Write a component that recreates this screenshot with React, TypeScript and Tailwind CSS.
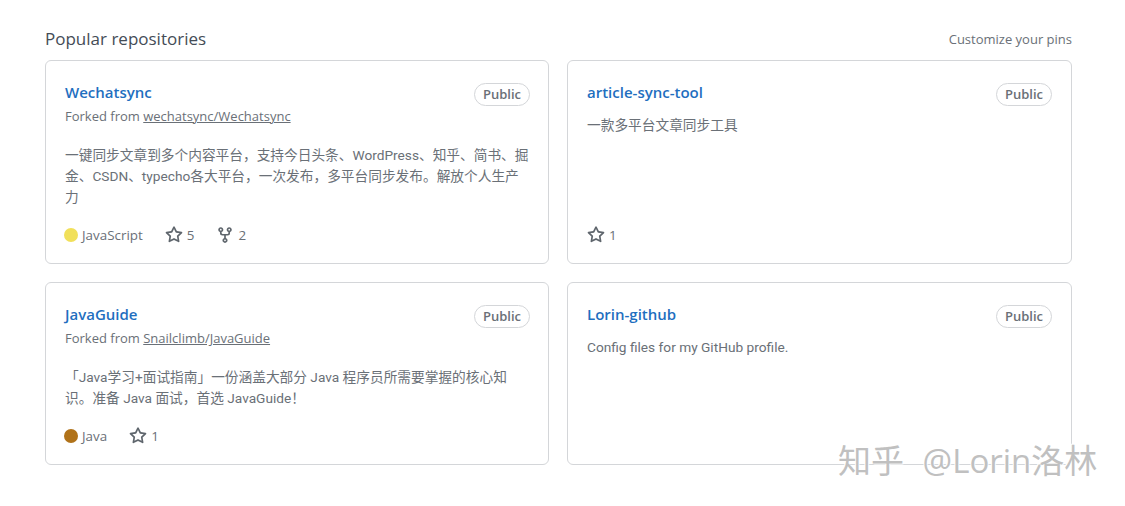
import type { ReactNode } from "react";

const FONT = `"Open Sans", "Noto Sans CJK SC", sans-serif`;
const DESC_FONT = `Roboto, "Noto Sans CJK SC", sans-serif`;

const StarIcon = () => (
  <svg viewBox="0 0 16 16" className="h-[18px] w-[18px] fill-[#5f666d]">
    <path
      fillRule="evenodd"
      d="M8 .25a.75.75 0 0 1 .673.418l1.882 3.815 4.21.612a.75.75 0 0 1 .416 1.279l-3.046 2.97.719 4.192a.75.75 0 0 1-1.088.791L8 12.347l-3.766 1.98a.75.75 0 0 1-1.088-.79l.72-4.194L.818 6.374a.75.75 0 0 1 .416-1.28l4.21-.611L7.327.668A.75.75 0 0 1 8 .25Zm0 2.445L6.615 5.5a.75.75 0 0 1-.564.41l-3.097.45 2.24 2.184a.75.75 0 0 1 .216.664l-.528 3.084 2.769-1.456a.75.75 0 0 1 .698 0l2.77 1.456-.53-3.084a.75.75 0 0 1 .216-.664l2.24-2.183-3.096-.45a.75.75 0 0 1-.564-.41L8 2.694Z"
    />
  </svg>
);

const ForkIcon = () => (
  <svg viewBox="0 0 16 16" className="h-[18px] w-[18px] fill-[#5f666d]">
    <path
      fillRule="evenodd"
      d="M5 5.372v.878c0 .414.336.75.75.75h4.5a.75.75 0 0 0 .75-.75v-.878a2.25 2.25 0 1 1 1.5 0v.878a2.25 2.25 0 0 1-2.25 2.25h-1.5v2.128a2.251 2.251 0 1 1-1.5 0V8.5h-1.5A2.25 2.25 0 0 1 3.5 6.25v-.878a2.25 2.25 0 1 1 1.5 0ZM5 3.25a.75.75 0 1 0-1.5 0 .75.75 0 0 0 1.5 0Zm6.75.75a.75.75 0 1 0 0-1.5.75.75 0 0 0 0 1.5Zm-3 8.75a.75.75 0 1 0-1.5 0 .75.75 0 0 0 1.5 0Z"
    />
  </svg>
);

const Stat = ({ icon, value }: { icon: ReactNode; value: number }) => (
  <span className="flex items-center gap-[4px] text-[13.4px] text-[#6a7077]">
    {icon}
    {value}
  </span>
);

type Repo = {
  name: string;
  fork?: string;
  description: string;
  language?: { name: string; color: string };
  stars?: number;
  forks?: number;
  cardClass: string;
};

const RepoCard = ({ repo }: { repo: Repo }) => (
  <div
    className={`flex flex-col rounded-[6px] border border-[#d4d6d9] pt-[19px] pb-[18px] pl-[19px] ${repo.cardClass}`}
  >
    <div className="flex items-start justify-between">
      <div>
        <a className="block text-[15px] leading-[25px] font-semibold text-[#1f6fbf]">
          {repo.name}
        </a>
        {repo.fork && (
          <p className="text-[13px] leading-[23px] text-[#6a7077]">
            Forked from <span className="underline">{repo.fork}</span>
          </p>
        )}
      </div>
      <span className="mt-[3px] flex h-[23px] w-[56px] items-center justify-center rounded-full border border-[#d4d6d9] text-[13px] font-semibold text-[#6a7077]">
        Public
      </span>
    </div>

    <p
      className={`text-[13.7px] leading-[21px] text-[#6a7077] ${repo.fork ? "mt-[17px]" : "mt-[9px]"}`}
      style={{ fontFamily: DESC_FONT }}
    >
      {repo.description}
    </p>

    <div className="mt-auto flex items-center text-[13.4px] text-[#6a7077]">
      {repo.language && (
        <span className="mr-[22px] -ml-[1px] flex items-center gap-[4px]">
          <span
            className="h-[14px] w-[14px] rounded-full"
            style={{ backgroundColor: repo.language.color }}
          />
          {repo.language.name}
        </span>
      )}
      {repo.stars !== undefined && (
        <span className="mr-[22px]">
          <Stat icon={<StarIcon />} value={repo.stars} />
        </span>
      )}
      {repo.forks !== undefined && <Stat icon={<ForkIcon />} value={repo.forks} />}
    </div>
  </div>
);

const repos: Repo[] = [
  {
    name: "Wechatsync",
    fork: "wechatsync/Wechatsync",
    description:
      "一键同步文章到多个内容平台，支持今日头条、WordPress、知乎、简书、掘金、CSDN、typecho各大平台，一次发布，多平台同步发布。解放个人生产力",
    language: { name: "JavaScript", color: "#f1e05a" },
    stars: 5,
    forks: 2,
    cardClass: "h-[204px] pr-[18px]",
  },
  {
    name: "article-sync-tool",
    description: "一款多平台文章同步工具",
    stars: 1,
    cardClass: "h-[204px] pr-[19px]",
  },
  {
    name: "JavaGuide",
    fork: "Snailclimb/JavaGuide",
    description:
      "「Java学习+面试指南」一份涵盖大部分 Java 程序员所需要掌握的核心知识。准备 Java 面试，首选 JavaGuide！",
    language: { name: "Java", color: "#b07219" },
    stars: 1,
    cardClass: "h-[183px] pr-[18px]",
  },
  {
    name: "Lorin-github",
    description: "Config files for my GitHub profile.",
    cardClass: "h-[183px] pr-[19px]",
  },
];

export default function App() {
  return (
    <div
      className="relative h-[506px] w-[1125px] overflow-hidden bg-white pt-[19px] pl-[45px]"
      style={{ fontFamily: FONT }}
    >
      <div className="flex h-[41px] w-[1027px] items-center justify-between">
        <h2 className="-mt-[2px] text-[17px] text-[#444c56]">Popular repositories</h2>
        <a className="text-[13px] text-[#6a7077]">Customize your pins</a>
      </div>

      <div className="grid w-[1027px] grid-cols-[504px_505px] gap-[18px]">
        {repos.map((repo) => (
          <RepoCard key={repo.name} repo={repo} />
        ))}
      </div>

      {/* zhihu watermark */}
      <div className="absolute top-[438px] left-[838px] text-[33px] leading-[46px] [word-spacing:10px] whitespace-nowrap text-[#c0c0c0] [text-shadow:1px_1px_1px_#ffffff,-1px_-1px_0_#ffffff]">
        知乎 @Lorin洛林
      </div>
    </div>
  );
}
